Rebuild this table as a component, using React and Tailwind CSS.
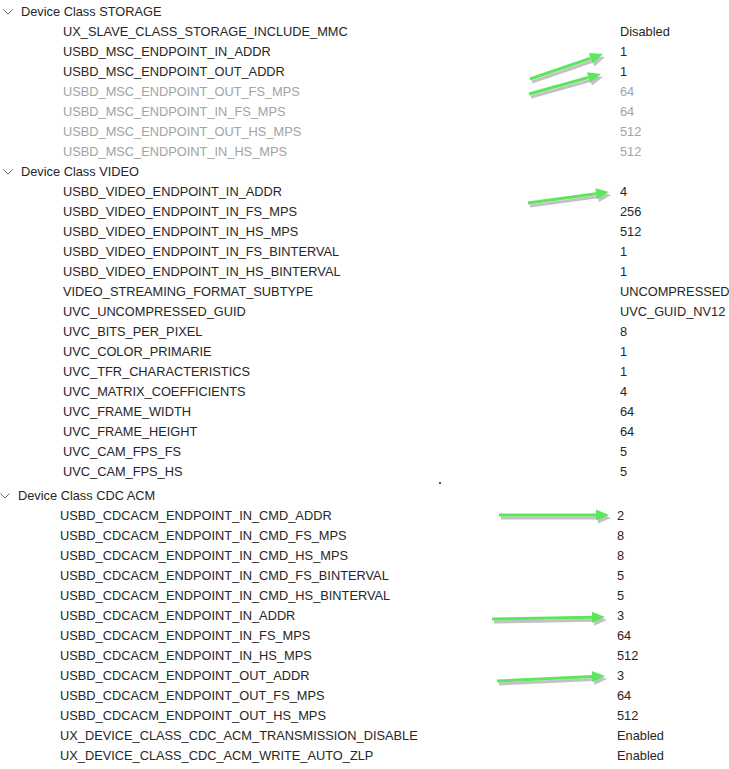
import React from "react";

const storage = [
  ["UX_SLAVE_CLASS_STORAGE_INCLUDE_MMC", "Disabled"],
  ["USBD_MSC_ENDPOINT_IN_ADDR", "1"],
  ["USBD_MSC_ENDPOINT_OUT_ADDR", "1"],
  ["USBD_MSC_ENDPOINT_OUT_FS_MPS", "64", true],
  ["USBD_MSC_ENDPOINT_IN_FS_MPS", "64", true],
  ["USBD_MSC_ENDPOINT_OUT_HS_MPS", "512", true],
  ["USBD_MSC_ENDPOINT_IN_HS_MPS", "512", true],
];

const video = [
  ["USBD_VIDEO_ENDPOINT_IN_ADDR", "4"],
  ["USBD_VIDEO_ENDPOINT_IN_FS_MPS", "256"],
  ["USBD_VIDEO_ENDPOINT_IN_HS_MPS", "512"],
  ["USBD_VIDEO_ENDPOINT_IN_FS_BINTERVAL", "1"],
  ["USBD_VIDEO_ENDPOINT_IN_HS_BINTERVAL", "1"],
  ["VIDEO_STREAMING_FORMAT_SUBTYPE", "UNCOMPRESSED"],
  ["UVC_UNCOMPRESSED_GUID", "UVC_GUID_NV12"],
  ["UVC_BITS_PER_PIXEL", "8"],
  ["UVC_COLOR_PRIMARIE", "1"],
  ["UVC_TFR_CHARACTERISTICS", "1"],
  ["UVC_MATRIX_COEFFICIENTS", "4"],
  ["UVC_FRAME_WIDTH", "64"],
  ["UVC_FRAME_HEIGHT", "64"],
  ["UVC_CAM_FPS_FS", "5"],
  ["UVC_CAM_FPS_HS", "5"],
];

const cdc = [
  ["USBD_CDCACM_ENDPOINT_IN_CMD_ADDR", "2"],
  ["USBD_CDCACM_ENDPOINT_IN_CMD_FS_MPS", "8"],
  ["USBD_CDCACM_ENDPOINT_IN_CMD_HS_MPS", "8"],
  ["USBD_CDCACM_ENDPOINT_IN_CMD_FS_BINTERVAL", "5"],
  ["USBD_CDCACM_ENDPOINT_IN_CMD_HS_BINTERVAL", "5"],
  ["USBD_CDCACM_ENDPOINT_IN_ADDR", "3"],
  ["USBD_CDCACM_ENDPOINT_IN_FS_MPS", "64"],
  ["USBD_CDCACM_ENDPOINT_IN_HS_MPS", "512"],
  ["USBD_CDCACM_ENDPOINT_OUT_ADDR", "3"],
  ["USBD_CDCACM_ENDPOINT_OUT_FS_MPS", "64"],
  ["USBD_CDCACM_ENDPOINT_OUT_HS_MPS", "512"],
  ["UX_DEVICE_CLASS_CDC_ACM_TRANSMISSION_DISABLE", "Enabled"],
  ["UX_DEVICE_CLASS_CDC_ACM_WRITE_AUTO_ZLP", "Enabled"],
];

function Chevron() {
  return (
    <svg width="10" height="6" viewBox="0 0 10 6" className="shrink-0">
      <path d="M0.5 0.5 L5 5 L9.5 0.5" fill="none" stroke="#6b6b6b" strokeWidth="1" />
    </svg>
  );
}

function Section({ title, rows, shifted }) {
  return (
    <div className={shifted ? "-ml-[3px] mt-[4px]" : ""}>
      <div className="flex h-5 items-center">
        <div className="flex w-[21px] justify-center pl-[3px] pr-[8px]">
          <Chevron />
        </div>
        <span>{title}</span>
      </div>
      {rows.map(([name, value, dim]) => (
        <div key={name} className={"flex h-5 items-center whitespace-nowrap " + (dim ? "text-[#a3a3a3]" : "")}>
          <span className="w-[557px] shrink-0 pl-[63px] box-content">{name}</span>
          <span>{value}</span>
        </div>
      ))}
    </div>
  );
}

function Arrow({ x1, y1, x2, y2 }) {
  const dx = x2 - x1;
  const dy = y2 - y1;
  const len = Math.hypot(dx, dy);
  const ux = dx / len;
  const uy = dy / len;
  const bx = x2 - ux * 13;
  const by = y2 - uy * 13;
  const px = -uy * 5.5;
  const py = ux * 5.5;
  const head = `${x2},${y2} ${bx + px},${by + py} ${bx - px},${by - py}`;
  return (
    <g>
      <g transform="translate(2,3)" opacity="0.45">
        <line x1={x1} y1={y1} x2={bx} y2={by} stroke="#7a7a7a" strokeWidth="3" />
        <polygon points={head} fill="#7a7a7a" />
      </g>
      <line x1={x1} y1={y1} x2={bx} y2={by} stroke="#5ce65c" strokeWidth="3" />
      <polygon points={head} fill="#5ce65c" />
    </g>
  );
}

export default function App() {
  return (
    <div
      className="relative h-[769px] w-[729px] overflow-hidden bg-white pt-[2px] text-[12.8px] text-[#262626]"
      style={{ fontFamily: '"Liberation Sans", Arial, sans-serif' }}
    >
      <Section title="Device Class STORAGE" rows={storage} />
      <Section title="Device Class VIDEO" rows={video} />
      <Section title="Device Class CDC ACM" rows={cdc} shifted />
      <div className="absolute left-[439px] top-[482px] h-[2px] w-[2px] bg-[#555]" />
      <svg className="pointer-events-none absolute left-0 top-0" width="729" height="769">
        <Arrow x1={530} y1={79} x2={603} y2={54} />
        <Arrow x1={529} y1={94} x2={601} y2={74} />
        <Arrow x1={528} y1={203} x2={609} y2={192} />
        <Arrow x1={499} y1={515} x2={609} y2={515} />
        <Arrow x1={492} y1={619} x2={605} y2={617} />
        <Arrow x1={497} y1={681} x2={605} y2={676} />
      </svg>
    </div>
  );
}
